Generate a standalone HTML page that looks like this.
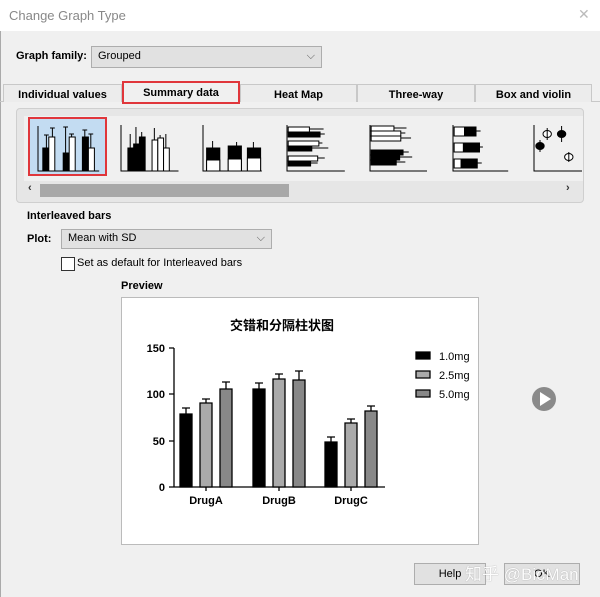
<!DOCTYPE html><html><head><meta charset="utf-8"><style>
body{margin:0;width:600px;height:597px;background:#f0f0f0;font-family:"Liberation Sans","Noto Sans CJK SC",sans-serif;position:relative;overflow:hidden;font-size:11px;color:#000}
.a{position:absolute}
.title{left:0;top:0;width:600px;height:31px;background:#fff;}
.sel{background:#e1e1e1;border:1px solid #adadad;box-sizing:border-box;font-size:11px;padding:3px 6px}
.tab{position:absolute;top:84px;height:18px;border:1px solid #c8c8c8;border-bottom:none;background:#ececec;font-weight:bold;font-size:11px;text-align:center;line-height:20px;box-sizing:border-box}
svg path,svg rect,svg circle{vector-effect:non-scaling-stroke}
</style></head><body>
<div class="a title"><div class="a" style="left:9px;top:8px;font-size:13px;color:#888">Change Graph Type</div><div class="a" style="left:578px;top:6px;color:#bbb;font-size:14px">✕</div></div>
<div class="a" style="left:0;top:31px;width:1px;height:566px;background:#aaa"></div>
<div class="a" style="left:16px;top:50px;font-weight:bold">Graph family:</div>
<div class="a sel" style="left:91px;top:46px;width:231px;height:22px">Grouped<span style="position:absolute;right:6px;top:3px;color:#555">⌵</span></div>
<div class="a" style="left:0;top:101px;width:600px;height:1px;background:#c8c8c8"></div>
<div class="tab" style="left:3px;width:119px">Individual values</div>
<div class="tab" style="left:240px;width:117px">Heat Map</div>
<div class="tab" style="left:357px;width:118px">Three-way</div>
<div class="tab" style="left:475px;width:117px">Box and violin</div>
<div class="a" style="left:122px;top:81px;width:118px;height:23px;border:2px solid #e0363b;box-sizing:border-box;font-weight:bold;text-align:center;line-height:20px;z-index:3;background:#f0f0f0">Summary data</div>
<div class="a" style="left:16px;top:108px;width:568px;height:95px;background:#e6e6e6;border:1px solid #cfcfcf;border-radius:4px;box-sizing:border-box"></div>
<div class="a" style="left:24px;top:116px;width:559px;height:65px;background:#f0f0f0"></div>
<div class="a" style="left:28px;top:117px;width:79px;height:59px;background:#c3dcf2;border:2px solid #e0363b;box-sizing:border-box"></div>
<svg class="a" style="left:0;top:110px" width="600" height="70" stroke="#000" stroke-width="1">
<g fill="#000">
<g transform="translate(38,0) scale(1.2,1) translate(-33,0)"><path d="M33 16V61H84" fill="none"/>
<rect x="37" y="38" width="5" height="23"/><rect x="42" y="27" width="5" height="34" fill="#fff"/><path d="M40 38V25M38 25h4M45 27V18M43 18h4" fill="none"/>
<rect x="54" y="43" width="5" height="18"/><rect x="59" y="27" width="5" height="34" fill="#fff"/><path d="M56 43V17M54 17h4M61 27V24M59 24h4" fill="none"/>
<rect x="70" y="27" width="5" height="34"/><rect x="75" y="38" width="5" height="23" fill="#fff"/><path d="M72 27V20M70 20h4M77 38V24M75 24h4" fill="none"/></g>
<g transform="translate(121,0) scale(1.15,1) translate(-105,0)"><path d="M105 15V61H155" fill="none"/><rect x="111" y="38" width="5" height="23"/><rect x="116" y="34" width="5" height="27"/><rect x="121" y="27" width="5" height="34"/><rect x="132" y="30" width="5" height="31" fill="#fff"/><rect x="137" y="28" width="5" height="33" fill="#fff"/><rect x="142" y="38" width="5" height="23" fill="#fff"/><path d="M113 38V24M118 34V17M123 27V22M134 30V18M139 28V25M144 38V24" fill="none"/></g>
<g transform="translate(203,0) scale(1.2,1) translate(-177,0)"><path d="M177 15V61H226" fill="none"/><rect x="180" y="38" width="11" height="23"/><rect x="180" y="50" width="11" height="11" fill="#fff"/><rect x="198" y="36" width="11" height="25"/><rect x="198" y="49" width="11" height="12" fill="#fff"/><rect x="214" y="38" width="11" height="23"/><rect x="214" y="48" width="11" height="13" fill="#fff"/><path d="M185 38V31M205 36V32M219 38V32" fill="none"/></g>
<g transform="translate(287,0) scale(1.18,1) translate(-251,0)"><path d="M251 15V61H300" fill="none"/><rect x="252" y="17" width="18" height="5" fill="#fff"/><rect x="252" y="22" width="27" height="5"/><rect x="252" y="31" width="26" height="5" fill="#fff"/><rect x="252" y="36" width="20" height="5"/><rect x="252" y="46" width="25" height="5" fill="#fff"/><rect x="252" y="51" width="19" height="5"/><path d="M270 19h12M279 24h4M278 33h3M272 38h14M277 48h6M271 53h6" fill="none"/></g>
<g transform="translate(370,0) scale(1.14,1) translate(-323,0)"><path d="M323 15V61H373" fill="none"/><rect x="324" y="16" width="20" height="5" fill="#fff"/><rect x="324" y="21" width="26" height="5" fill="#fff"/><rect x="324" y="26" width="26" height="5" fill="#fff"/><rect x="324" y="40" width="28" height="5"/><rect x="324" y="45" width="25" height="5"/><rect x="324" y="50" width="22" height="5"/><path d="M344 18h11M350 23h4M350 28h9M352 42h5M349 47h11M346 52h8" fill="none"/></g>
<g transform="translate(453,0) scale(1.15,1) translate(-395,0)"><path d="M395 15V61H443" fill="none"/><rect x="396" y="17" width="19" height="9" fill="#fff"/><rect x="405" y="17" width="10" height="9"/><rect x="396" y="33" width="22" height="9" fill="#fff"/><rect x="404" y="33" width="14" height="9"/><rect x="396" y="49" width="20" height="9" fill="#fff"/><rect x="402" y="49" width="14" height="9"/><path d="M415 21h4M418 37h3M416 53h4" fill="none"/></g>
<g transform="translate(534,0) scale(1.2,1) translate(-465,0)"><path d="M465 15V61H505" fill="none"/><circle cx="470" cy="36" r="3.5"/><circle cx="476" cy="24" r="3.5" fill="#fff"/><circle cx="488" cy="24" r="3.5"/><circle cx="494" cy="47" r="3.5" fill="#fff"/><path d="M470 30V42M476 18V30M488 16V32M494 42V52" fill="none"/></g></g></svg>
<div class="a" style="left:24px;top:183px;width:555px;height:14px"><span class="a" style="left:4px;top:-1px;color:#333;font-weight:bold">‹</span><div class="a" style="left:16px;top:1px;width:249px;height:13px;background:#a8a8a8"></div><span class="a" style="left:542px;top:-1px;color:#333;font-weight:bold">›</span></div>
<div class="a" style="left:27px;top:210px;font-weight:bold">Interleaved bars</div>
<div class="a" style="left:27px;top:233px;font-weight:bold">Plot:</div>
<div class="a sel" style="left:61px;top:229px;width:211px;height:20px;padding-top:2px">Mean with SD<span style="position:absolute;right:6px;top:2px;color:#555">⌵</span></div>
<div class="a" style="left:61px;top:257px;width:12px;height:12px;border:1px solid #333;background:#fff"></div>
<div class="a" style="left:77px;top:257px">Set as default for Interleaved bars</div>
<div class="a" style="left:121px;top:280px;font-weight:bold">Preview</div>
<div class="a" style="left:121px;top:297px;width:358px;height:248px;background:#fff;border:1px solid #bbb;box-sizing:border-box"></div>
<svg class="a" style="left:0;top:0" width="600" height="597" font-family="Liberation Sans,sans-serif">
<text x="282" y="330" text-anchor="middle" font-size="13" font-weight="bold" font-family="Noto Sans CJK SC,sans-serif">交错和分隔柱状图</text>
<g stroke="#000" stroke-width="1.3" fill="none"><path d="M174 348V487H385M169 348h5M169 394h5M169 441h5M169 487h5M206 487v4M279 487v4M351 487v4"/></g>
<g font-size="11" font-weight="bold" text-anchor="end"><text x="165" y="352">150</text><text x="165" y="398">100</text><text x="165" y="445">50</text><text x="165" y="491">0</text></g>
<g font-size="11" font-weight="bold" text-anchor="middle"><text x="206" y="504">DrugA</text><text x="279" y="504">DrugB</text><text x="351" y="504">DrugC</text></g>
<g stroke="#000" stroke-width="1.3">
<rect x="180" y="414" width="12" height="73" fill="#000"/><rect x="200" y="403" width="12" height="84" fill="#aaa"/><rect x="220" y="389" width="12" height="98" fill="#888"/>
<rect x="253" y="389" width="12" height="98" fill="#000"/><rect x="273" y="379" width="12" height="108" fill="#aaa"/><rect x="293" y="380" width="12" height="107" fill="#888"/>
<rect x="325" y="442" width="12" height="45" fill="#000"/><rect x="345" y="423" width="12" height="64" fill="#aaa"/><rect x="365" y="411" width="12" height="76" fill="#888"/>
<path d="M186 414v-6m-4 0h8M206 403v-4m-4 0h8M226 389v-7m-4 0h8M259 389v-6m-4 0h8M279 379v-5m-4 0h8M299 380v-9m-4 0h8M331 442v-5m-4 0h8M351 423v-4m-4 0h8M371 411v-5m-4 0h8" fill="none"/>
<rect x="416" y="352" width="14" height="7" fill="#000"/><rect x="416" y="371" width="14" height="7" fill="#aaa"/><rect x="416" y="390" width="14" height="7" fill="#888"/></g>
<g font-size="11"><text x="439" y="360">1.0mg</text><text x="439" y="379">2.5mg</text><text x="439" y="398">5.0mg</text></g>
<circle cx="544" cy="399" r="12" fill="#8a8a8a"/><path d="M540 392v14l11-7z" fill="#fff"/>
</svg>
<div class="a" style="left:414px;top:563px;width:72px;height:22px;background:#e1e1e1;border:1px solid #adadad;box-sizing:border-box;text-align:center;line-height:20px">Help</div>
<div class="a" style="left:504px;top:563px;width:76px;height:22px;background:#e1e1e1;border:1px solid #adadad;box-sizing:border-box;text-align:center;line-height:20px">OK</div>
<div class="a" style="left:465px;top:560px;font-size:17px;color:#fff;text-shadow:0 0 1px #888;opacity:.9">知乎 @BioMan</div>
</body></html>
